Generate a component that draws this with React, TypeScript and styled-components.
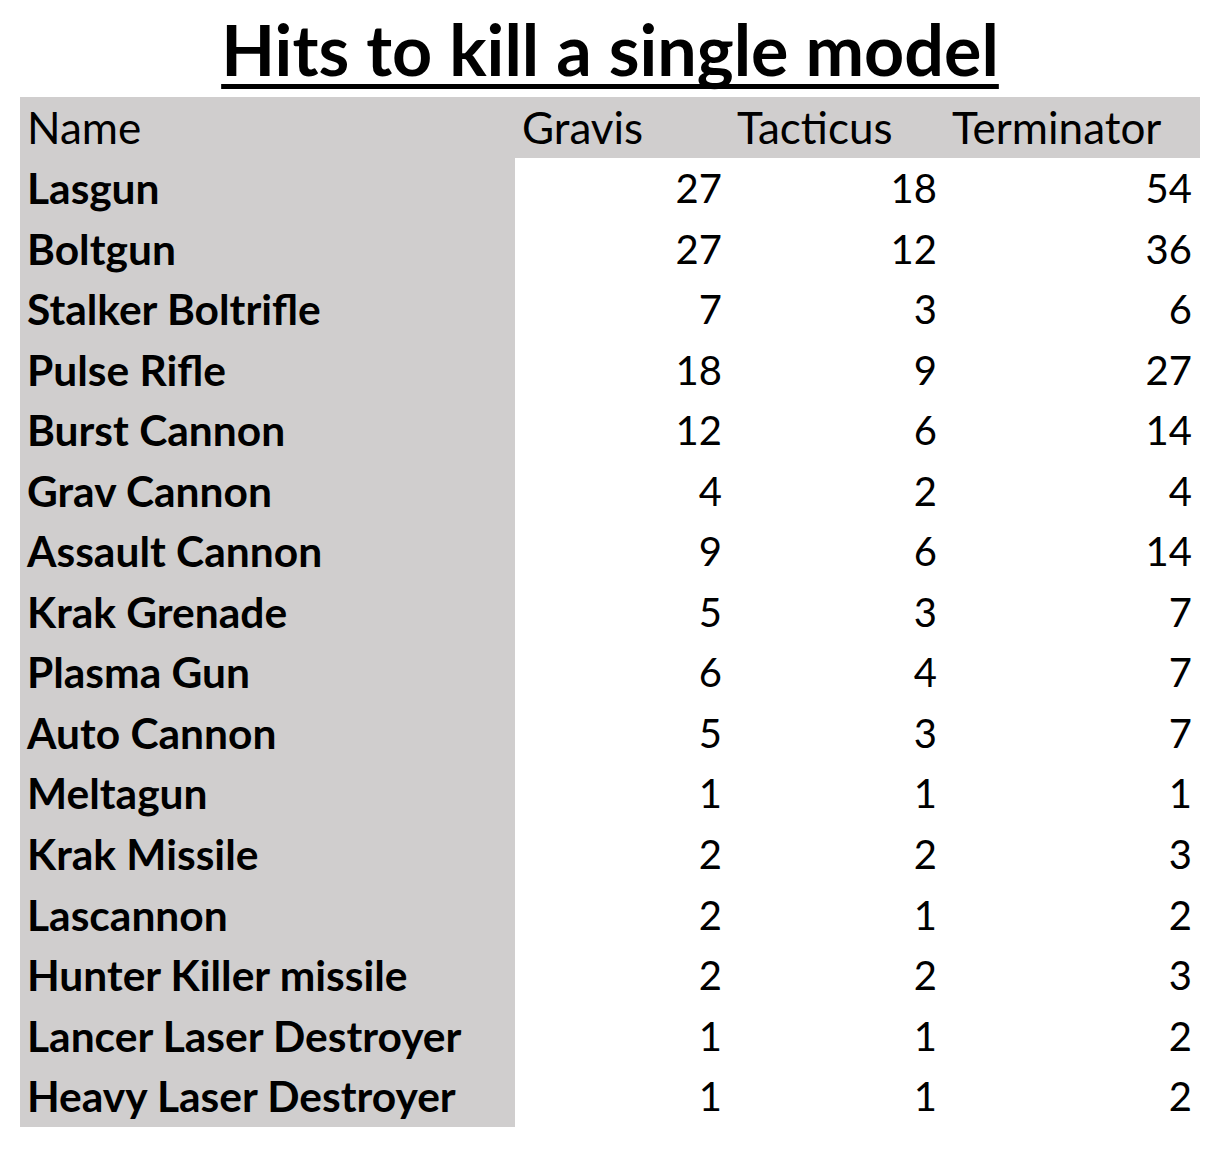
import React from "react";
import styled, { createGlobalStyle } from "styled-components";

const Global = createGlobalStyle`
  html, body { margin: 0; padding: 0; background: #ffffff; }
  body { font-family: Lato, "Open Sans", sans-serif; color: #000; }
`;

const Page = styled.div`
  width: 1221px;
  padding: 0 0 0 20px;
  box-sizing: border-box;
`;

const Title = styled.h1`
  margin: 0;
  width: 1180px;
  height: 97px;
  box-sizing: border-box;
  padding-top: 13px;
  text-align: center;
  font-family: Lato, sans-serif;
  font-weight: 700;
  font-size: 70px;
  line-height: 72px;
  text-decoration: underline;
  text-decoration-thickness: 5px;
  text-underline-offset: 8px;
  text-decoration-skip-ink: none;
`;

const Grid = styled.div`
  display: grid;
  grid-template-columns: 495px 215px 215px 255px;
  grid-template-rows: 61px;
  grid-auto-rows: 60.56px;
`;

const HeadCell = styled.div`
  background: #d0cece;
  font-weight: 400;
  font-size: 44px;
  line-height: 61px;
  padding: 0 8px 0 7px;
  white-space: nowrap;
`;

const NameCell = styled.div`
  background: #d0cece;
  font-weight: 700;
  font-size: 42.5px;
  line-height: 60px;
  padding: 0 7px;
  white-space: nowrap;
`;

const NumCell = styled.div`
  background: #ffffff;
  font-weight: 400;
  font-size: 40px;
  line-height: 60px;
  padding: 0 8px;
  text-align: right;
`;

const rows: [string, number, number, number][] = [
  ["Lasgun", 27, 18, 54],
  ["Boltgun", 27, 12, 36],
  ["Stalker Boltrifle", 7, 3, 6],
  ["Pulse Rifle", 18, 9, 27],
  ["Burst Cannon", 12, 6, 14],
  ["Grav Cannon", 4, 2, 4],
  ["Assault Cannon", 9, 6, 14],
  ["Krak Grenade", 5, 3, 7],
  ["Plasma Gun", 6, 4, 7],
  ["Auto Cannon", 5, 3, 7],
  ["Meltagun", 1, 1, 1],
  ["Krak Missile", 2, 2, 3],
  ["Lascannon", 2, 1, 2],
  ["Hunter Killer missile", 2, 2, 3],
  ["Lancer Laser Destroyer", 1, 1, 2],
  ["Heavy Laser Destroyer", 1, 1, 2],
];

export default function App() {
  return (
    <Page>
      <Global />
      <Title>Hits to kill a single model</Title>
      <Grid>
        <HeadCell>Name</HeadCell>
        <HeadCell>Gravis</HeadCell>
        <HeadCell>Tacticus</HeadCell>
        <HeadCell>Terminator</HeadCell>
        {rows.map(([n, a, b, c]) => (
          <React.Fragment key={n}>
            <NameCell>{n}</NameCell>
            <NumCell>{a}</NumCell>
            <NumCell>{b}</NumCell>
            <NumCell>{c}</NumCell>
          </React.Fragment>
        ))}
      </Grid>
    </Page>
  );
}
